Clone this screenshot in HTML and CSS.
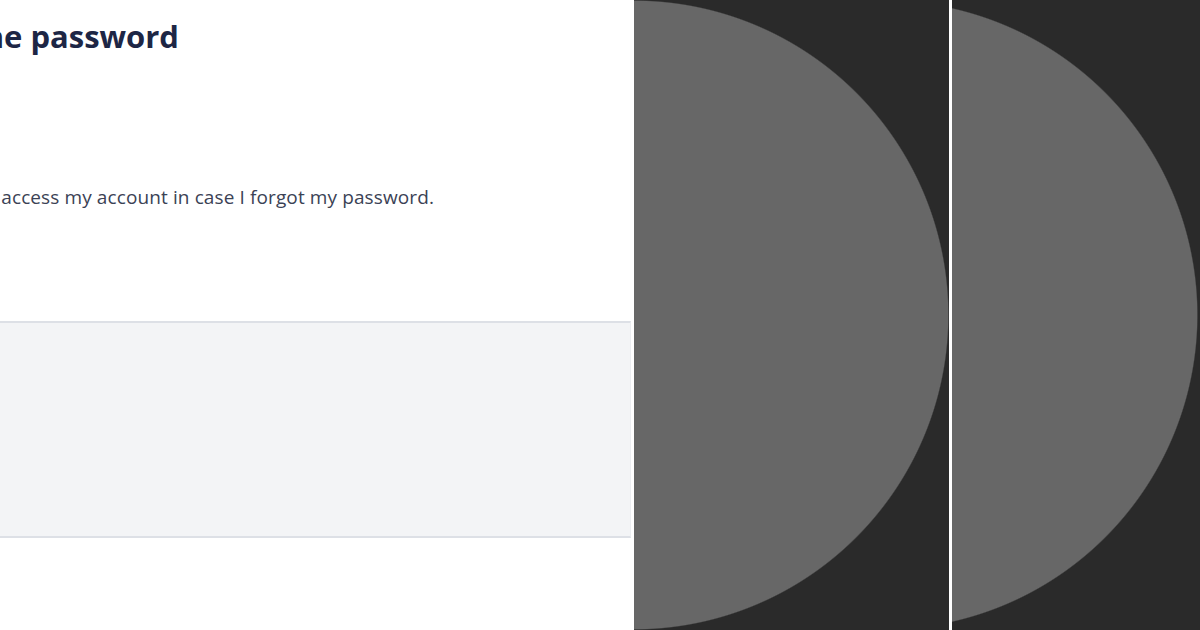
FILE: index.html
```html
<!DOCTYPE html>
<html lang="en">
<head>
<meta charset="utf-8">
<title>Password</title>
<link rel="stylesheet" href="styles.css">
</head>
<body>
<div class="page">
  <section class="content">
    <div class="clip clip-title"><h1 class="title">Set up one password</h1></div>
    <div class="clip clip-text"><p class="text">I want to be able to access my account in case I forgot my password.</p></div>
    <div class="box"></div>
  </section>
  <div class="panel panel-one"></div>
  <div class="panel panel-two"></div>
</div>
</body>
</html>
```

FILE: styles.css
```css
html, body {
  margin: 0;
  padding: 0;
  background: #ffffff;
}
.page {
  display: flex;
  width: 1200px;
  height: 630px;
  overflow: hidden;
}
.content {
  width: 634px;
  flex: none;
  padding-top: 16px;
  box-sizing: border-box;
  font-family: "Open Sans", "Noto Sans", sans-serif;
}
.clip {
  display: flex;
  justify-content: flex-end;
  overflow: hidden;
  white-space: nowrap;
}
.clip-title { width: 179px; }
.clip-text { width: 434px; margin-top: 129px; }
.title {
  margin: 0;
  flex: none;
  font-size: 31px;
  line-height: 40px;
  font-weight: 700;
  color: #1d2645;
}
.text {
  margin: 0;
  flex: none;
  font-size: 19px;
  line-height: 24px;
  letter-spacing: 0.11px;
  color: #3b4255;
}
.box {
  margin-top: 112px;
  width: 630px;
  height: 213px;
  background: #f3f4f6;
  border-top: 2px solid #dde0e6;
  border-bottom: 2px solid #dde0e6;
  border-right: 1px solid #eceef1;
  box-sizing: content-box;
}
.panel {
  flex: none;
  height: 630px;
}
.panel-one {
  width: 315px;
  background: radial-gradient(circle 315px at 0 315px, #676767 99.6%, #2a2a2a 100%);
}
.panel-two {
  width: 248px;
  margin-left: 3px;
  background: radial-gradient(circle 315px at -69px 315px, #676767 99.6%, #2a2a2a 100%);
}
```
